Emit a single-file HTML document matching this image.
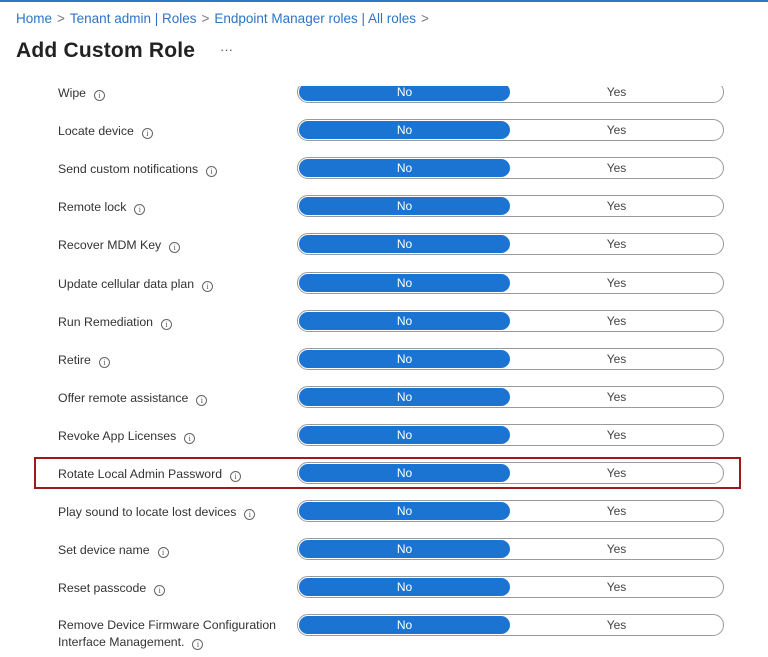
<!DOCTYPE html>
<html><head><meta charset="utf-8"><style>
*{margin:0;padding:0;box-sizing:border-box}
body{width:768px;height:657px;background:#fff;position:relative;overflow:hidden;font-family:"Liberation Sans",sans-serif}
.topline{position:absolute;left:0;top:0;width:768px;height:2px;background:#2a78c8}
.bc{position:absolute;left:16px;top:11px;font-size:13.5px;color:#2f74c3;white-space:nowrap}
.bc .s{color:#777;margin:0 5px}
h1{position:absolute;left:16px;top:39px;font-size:21px;font-weight:600;color:#222;letter-spacing:0.2px}
.dots{position:absolute;left:220px;top:42px;font-size:13px;color:#555}
.clip{position:absolute;left:0;top:86px;width:768px;height:571px;overflow:hidden}
.lbl{position:absolute;left:58px;font-size:12.3px;color:#333;white-space:nowrap;line-height:17px}
.i{display:inline-block;width:11px;height:11px;border:1px solid #666;border-radius:50%;font-size:8px;line-height:9px;text-align:center;color:#555;margin-left:8px;vertical-align:-1px;font-family:"Liberation Serif",serif}
.tg{position:absolute;left:297px;width:427px;height:22px;border:1px solid #9a9a9a;border-radius:11px;background:#fff}
.tg .b{position:absolute;left:1px;top:1px;width:211px;height:18px;background:#1c74d2;border-radius:9px;color:#fff;font-size:12px;line-height:18px;text-align:center}
.tg .y{position:absolute;left:212px;top:1px;width:213px;height:18px;font-size:12px;line-height:18px;text-align:center;color:#444}
.red{position:absolute;left:34px;top:457px;width:707px;height:32px;border:2px solid #9b1b1b}
</style></head><body>
<div class="topline"></div>
<div class="bc">Home<span class="s">&gt;</span>Tenant admin | Roles<span class="s">&gt;</span>Endpoint Manager roles | All roles<span class="s">&gt;</span></div>
<h1>Add Custom Role</h1>
<div class="dots">···</div>
<div class="clip">
<script>
var L=["Wipe","Locate device","Send custom notifications","Remote lock","Recover MDM Key","Update cellular data plan","Run Remediation","Retire","Offer remote assistance","Revoke App Licenses","Rotate Local Admin Password","Play sound to locate lost devices","Set device name","Reset passcode","Remove Device Firmware Configuration<br>Interface Management."];
var h="";
for(var k=0;k<L.length;k++){var c=92+k*38.1-86;
var last=k==L.length-1;
var ly=last?c-8:c-7;
h+='<div class="lbl" style="top:'+ly+'px">'+L[k]+'<span class="i">i</span></div>';
h+='<div class="tg" style="top:'+(c-11)+'px"><div class="b">No</div><div class="y">Yes</div></div>';}
document.write(h);
</script>
</div>
<div class="red"></div>
</body></html>
